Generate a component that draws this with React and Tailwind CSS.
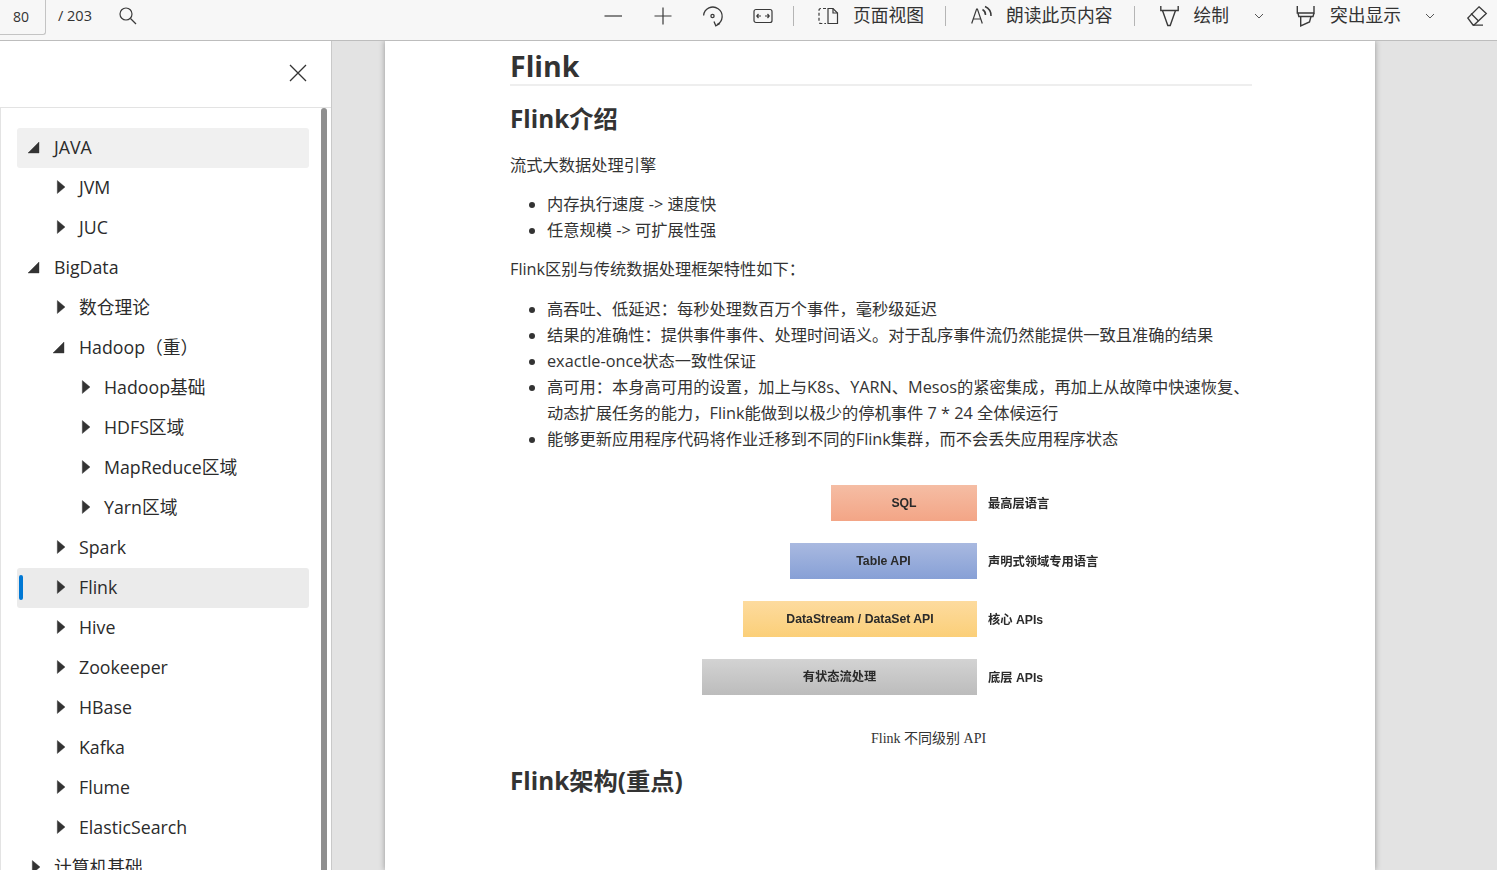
import React from 'react';

const uiFont = { fontFamily: '"Open Sans", "Noto Sans CJK SC", sans-serif' };

const treeItems = [
    { label: 'JAVA', level: 0, open: true, hover: true },
    { label: 'JVM', level: 1 },
    { label: 'JUC', level: 1 },
    { label: 'BigData', level: 0, open: true },
    { label: '数仓理论', level: 1 },
    { label: 'Hadoop（重）', level: 1, open: true },
    { label: 'Hadoop基础', level: 2 },
    { label: 'HDFS区域', level: 2 },
    { label: 'MapReduce区域', level: 2 },
    { label: 'Yarn区域', level: 2 },
    { label: 'Spark', level: 1 },
    { label: 'Flink', level: 1, active: true },
    { label: 'Hive', level: 1 },
    { label: 'Zookeeper', level: 1 },
    { label: 'HBase', level: 1 },
    { label: 'Kafka', level: 1 },
    { label: 'Flume', level: 1 },
    { label: 'ElasticSearch', level: 1 },
    { label: '计算机基础', level: 0 },
];

const indents = ['pl-[37px]', 'pl-[62px]', 'pl-[87px]'];

function Caret({ open }) {
    return (
        <svg viewBox="0 0 12 14" className="w-[12px] h-[14px] mt-[-2px]">
            {open
                ? <path d="M11 2V13H0Z" fill="#333" stroke="#333" strokeWidth="0.4" strokeLinejoin="round" />
                : <path d="M4.3 0.5L12 7L4.3 13.5Z" fill="#333" stroke="#333" strokeWidth="0.4" strokeLinejoin="round" />}
        </svg>
    );
}

function TreeRow({ item }) {
    let bg = '';
    if (item.active) bg = 'bg-[#ebebeb]';
    if (item.hover) bg = 'bg-[#f0f0f0]';
    return (
        <div className={`relative flex items-center h-[40px] shrink-0 rounded-[3px] text-[17.75px] text-[#2b2b2b] whitespace-nowrap ${indents[item.level]} ${bg}`}>
            {item.active && <span className="absolute left-[2px] top-[7px] w-[4px] h-[25px] rounded-[2px] bg-[#0078d4]" />}
            <span className="flex w-[12px] ml-[-26px] mr-[14px]"><Caret open={item.open} /></span>
            <span className="pb-[2px]">{item.label}</span>
        </div>
    );
}

function Icon({ className, strokeWidth = 1.2, children }) {
    return (
        <svg viewBox="0 0 20 20" fill="none" stroke="#3a3a3a" strokeWidth={strokeWidth} className={`shrink-0 w-[20px] h-[20px] overflow-visible ${className}`}>
            {children}
        </svg>
    );
}

function Divider({ className }) {
    return <span className={`shrink-0 w-px h-[20px] bg-[#b5b5b5] ${className}`} />;
}

function Chevron({ className }) {
    return (
        <svg viewBox="0 0 10 6" fill="none" stroke="#555" className={`shrink-0 w-[10px] h-[6px] ${className}`}>
            <path d="M1 1L5 5L9 1" />
        </svg>
    );
}

function Toolbar() {
    return (
        <div className="flex items-center h-[41px] shrink-0 pb-[9px] bg-[#f7f7f7] border-b border-[#bdbdbd] text-[#333]">
            <div className="flex items-center justify-center self-start w-[46px] h-[35px] pr-[3px] pb-[1px] border-r border-b border-[#c4c4c4] rounded-br-[3px] text-[14px]">80</div>
            <span className="ml-[12px] w-[36px] text-[14.5px] whitespace-nowrap">/ 203</span>
            <Icon className="ml-[24px]">
                <circle cx="8" cy="8" r="6" />
                <path d="M12.5 12.5L18 18" />
            </Icon>
            <Icon className="ml-[465px]"><path d="M1.5 10H19" /></Icon>
            <Icon className="ml-[30px]"><path d="M1.5 10H18.5M10 1.5V18.5" /></Icon>
            <Icon className="ml-[30px]" strokeWidth={1.3}>
                <path d="M0.6 9.5A9.3 9.3 0 1 1 14 18.7" />
                <circle cx="9.5" cy="10" r="1.6" />
                <path d="M11 15.5L12.8 19.8L17 17.5" />
            </Icon>
            <Icon className="ml-[30px]">
                <rect x="1" y="3.5" width="18" height="13" rx="2" />
                <path d="M4 10H8M5.5 8L3.8 10L5.5 12M12 10H16M14.5 8L16.2 10L14.5 12" />
            </Icon>
            <Divider className="ml-[20px]" />
            <Icon className="ml-[24px]">
                <path d="M8 2.5H3Q1 2.5 1 4.5V15.5Q1 17.5 3 17.5H8" strokeDasharray="3 2" />
                <path d="M10 2.5H15L19.5 7V17.5H10Z" />
                <path d="M15 2.5V7H19.5" />
            </Icon>
            <span className="ml-[15px] text-[17.75px] whitespace-nowrap">页面视图</span>
            <Divider className="ml-[21px]" />
            <Icon className="ml-[25px]">
                <path d="M0.7 17.5L5.6 3H6.4L11.3 17.5M2.3 13H9.7" />
                <path d="M11.5 3.5A6 6 0 0 1 14.5 9M14 0.5A10 10 0 0 1 20 10" strokeWidth="1.5" />
            </Icon>
            <span className="ml-[15px] text-[17.75px] whitespace-nowrap">朗读此页内容</span>
            <Divider className="ml-[21px]" />
            <Icon className="ml-[25px]" strokeWidth={1.4}>
                <path d="M0.8 0V4.5H18.2V0" />
                <path d="M2.5 4.5L7.8 19.5H10.2L15.5 4.5" />
            </Icon>
            <span className="ml-[14px] text-[17.75px] whitespace-nowrap">绘制</span>
            <Chevron className="ml-[25px]" />
            <Icon className="ml-[32px]" strokeWidth={1.4}>
                <path d="M1.3 0V7H18V0" />
                <path d="M2 7L2.8 10.5H17L18 7" />
                <path d="M4.7 10.5V20L13.5 16L15 10.5" />
            </Icon>
            <span className="ml-[14px] text-[17.75px] whitespace-nowrap">突出显示</span>
            <Chevron className="ml-[24px]" />
            <Icon className="ml-[32px]" strokeWidth={1.3}>
                <path d="M12 0.8L19.3 7.5L7 19H6L0.8 12Z" />
                <path d="M4 7.5L11.5 15M6 19.2H16" />
            </Icon>
        </div>
    );
}

function Sidebar() {
    return (
        <div className="flex flex-col w-[332px] shrink-0 bg-white border-r border-[#c9c9c9]">
            <div className="flex items-center justify-end h-[67px] shrink-0 pr-[24px] border-b border-[#e3e3e3]">
                <svg viewBox="0 0 18 18" fill="none" stroke="#333" strokeWidth="1.3" className="w-[18px] h-[18px] mt-[-3px]">
                    <path d="M1 1L17 17M17 1L1 17" />
                </svg>
            </div>
            <div className="flex flex-1 min-h-0 border-l border-[#e3e3e3]">
                <div className="flex flex-col w-[320px] shrink-0 pt-[20px] pl-[16px] pr-[12px] overflow-hidden">
                    {treeItems.map((item) => <TreeRow key={item.label} item={item} />)}
                </div>
                <div className="w-[6px] shrink-0 rounded-t-[3px] bg-[#8f8f8f]" />
            </div>
        </div>
    );
}

const layers = [
    { label: 'SQL', note: '最高层语言', width: 'w-[146px]', bg: 'from-[#f5bda4] to-[#f3a586]' },
    { label: 'Table API', note: '声明式领域专用语言', width: 'w-[187px]', bg: 'from-[#a9b9e0] to-[#87a0d6]' },
    { label: 'DataStream / DataSet API', note: '核心 APIs', width: 'w-[234px]', bg: 'from-[#fddb9e] to-[#fbcf78]' },
    { label: '有状态流处理', note: '底层 APIs', width: 'w-[275px]', bg: 'from-[#d3d3d3] to-[#bcbcbc]' },
];

function ApiDiagram() {
    return (
        <div className="flex flex-col gap-[22px] mt-[33px]" style={{ fontFamily: '"Liberation Sans", "Noto Sans CJK SC", sans-serif' }}>
            {layers.map((layer) => (
                <div key={layer.label} className="flex items-center h-[36px] text-[12.25px] font-bold text-[#2a2a2a]">
                    <div className="flex justify-end w-[467px] shrink-0">
                        <div className={`flex items-center justify-center h-[36px] bg-gradient-to-b ${layer.width} ${layer.bg}`}>
                            <span className="blur-[0.3px]">{layer.label}</span>
                        </div>
                    </div>
                    <span className="ml-[11px] pt-[2px] blur-[0.3px]">{layer.note}</span>
                </div>
            ))}
        </div>
    );
}

function Page() {
    return (
        <div className="w-[990px] ml-[53px] shrink-0 bg-white shadow-[0_0_6px_rgba(0,0,0,0.35)] pl-[125px] pr-[123px] text-[16.25px] text-[#333]">
            <h1 className="h-[45px] pt-[3px] text-[28.5px] leading-[44px] font-bold border-b-2 border-[#eeeeee] text-[#333]">Flink</h1>
            <h2 className="mt-[15px] text-[24.3px] leading-[36px] font-bold">Flink介绍</h2>
            <p className="mt-[15px] leading-[26px]">流式大数据处理引擎</p>
            <ul className="mt-[13px] pl-[37px] list-disc leading-[26px]">
                <li>内存执行速度 -&gt; 速度快</li>
                <li>任意规模 -&gt; 可扩展性强</li>
            </ul>
            <p className="mt-[13px] leading-[26px]">Flink区别与传统数据处理框架特性如下：</p>
            <ul className="mt-[14px] pl-[37px] list-disc leading-[26px]">
                <li>高吞吐、低延迟：每秒处理数百万个事件，毫秒级延迟</li>
                <li>结果的准确性：提供事件事件、处理时间语义。对于乱序事件流仍然能提供一致且准确的结果</li>
                <li>exactle-once状态一致性保证</li>
                <li>高可用：本身高可用的设置，加上与K8s、YARN、Mesos的紧密集成，再加上从故障中快速恢复、动态扩展任务的能力，Flink能做到以极少的停机事件 7 * 24 全体候运行</li>
                <li>能够更新应用程序代码将作业迁移到不同的Flink集群，而不会丢失应用程序状态</li>
            </ul>
            <ApiDiagram />
            <p className="mt-[33px] ml-[361px] text-[14px] text-[#333] whitespace-nowrap" style={{ fontFamily: '"Liberation Serif", "Noto Sans CJK SC", serif' }}>Flink 不同级别 API</p>
            <h2 className="mt-[14px] text-[24.3px] leading-[36px] font-bold">Flink架构(重点)</h2>
        </div>
    );
}

export default function App() {
    return (
        <div className="flex flex-col h-[870px] overflow-hidden" style={uiFont}>
            <Toolbar />
            <div className="flex flex-1 min-h-0">
                <Sidebar />
                <div className="flex flex-1 min-w-0 bg-[#e3e3e3] overflow-hidden">
                    <Page />
                </div>
            </div>
        </div>
    );
}
